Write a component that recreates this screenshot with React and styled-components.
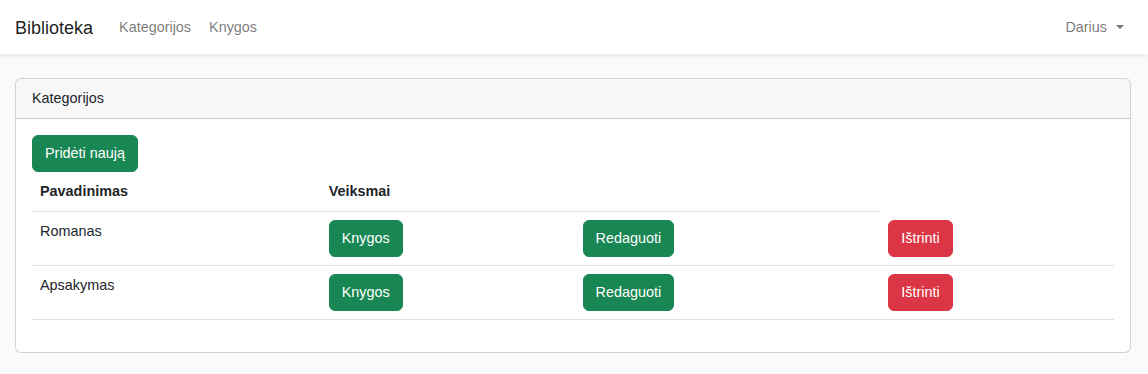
import React from "react";
import styled, { createGlobalStyle } from "styled-components";

const Global = createGlobalStyle`
  * { box-sizing: border-box; }
  html, body { margin: 0; padding: 0; }
  body {
    background: #f8fafc;
    font-family: "Liberation Sans", Arial, sans-serif;
    font-size: 14.4px;
    line-height: 1.6;
    color: #212529;
  }
`;

const Navbar = styled.nav`
  background: #fff;
  height: 54px;
  box-shadow: 0 2px 4px rgba(0, 0, 0, 0.075);
  display: flex;
  align-items: center;
  padding: 2px 17px 0 15px;
`;

const Brand = styled.a`
  font-size: 18px;
  color: rgba(0, 0, 0, 0.9);
  text-decoration: none;
  margin-right: 26px;
  line-height: 1;
`;

const NavLinks = styled.div`
  display: flex;
  gap: 18px;
  flex: 1;
`;

const NavLink = styled.a`
  color: rgba(0, 0, 0, 0.55);
  text-decoration: none;
`;

const UserMenu = styled.a`
  color: rgba(0, 0, 0, 0.55);
  text-decoration: none;
  margin-right: 7px;
  &::after {
    content: "";
    display: inline-block;
    margin-left: 9px;
    vertical-align: 3.5px;
    border-top: 4.3px solid rgba(0, 0, 0, 0.55);
    border-left: 4.3px solid transparent;
    border-right: 4.3px solid transparent;
  }
`;

const Main = styled.main`
  padding: 24px 17px 24px 15px;
`;

const Card = styled.div`
  background: #fff;
  border: 1px solid rgba(0, 0, 0, 0.175);
  border-radius: 6px;
`;

const CardHeader = styled.div`
  background: rgba(0, 0, 0, 0.03);
  border-bottom: 1px solid rgba(0, 0, 0, 0.175);
  padding: 8px 16px;
  border-radius: 5px 5px 0 0;
`;

const CardBody = styled.div`
  padding: 16px;
`;

const Button = styled.button`
  font-family: inherit;
  font-size: 14.4px;
  line-height: 1.6;
  padding: 6px 12px;
  border-radius: 6px;
  border: 1px solid ${(p) => (p.$variant === "danger" ? "#dc3545" : "#198754")};
  background: ${(p) => (p.$variant === "danger" ? "#dc3545" : "#198754")};
  color: #fff;
  cursor: pointer;
`;

const Table = styled.table`
  width: 100%;
  border-collapse: collapse;
  margin-bottom: 16px;
`;

const Col = styled.col`
  width: ${(p) => p.$w}px;
`;

const Th = styled.th`
  text-align: left;
  font-weight: bold;
  padding: 8px;
  border-bottom: 1px solid #dee2e6;
  vertical-align: bottom;
`;

const Td = styled.td`
  padding: 8px;
  border-bottom: 1px solid #dee2e6;
  vertical-align: top;
`;

const rows = ["Romanas", "Apsakymas"];

export default function App() {
  return (
    <>
      <Global />
      <Navbar>
        <Brand href="#">Biblioteka</Brand>
        <NavLinks>
          <NavLink href="#">Kategorijos</NavLink>
          <NavLink href="#">Knygos</NavLink>
        </NavLinks>
        <UserMenu href="#">Darius</UserMenu>
      </Navbar>
      <Main>
        <Card>
          <CardHeader>Kategorijos</CardHeader>
          <CardBody>
            <Button>Pridėti naują</Button>
            <Table>
              <colgroup>
                <Col $w={289} />
                <Col $w={254} />
                <Col $w={306} />
                <Col $w={234} />
              </colgroup>
              <thead>
                <tr>
                  <Th>Pavadinimas</Th>
                  <Th colSpan={2}>Veiksmai</Th>
                </tr>
              </thead>
              <tbody>
                {rows.map((r) => (
                  <tr key={r}>
                    <Td>{r}</Td>
                    <Td>
                      <Button>Knygos</Button>
                    </Td>
                    <Td>
                      <Button>Redaguoti</Button>
                    </Td>
                    <Td>
                      <Button $variant="danger">Ištrinti</Button>
                    </Td>
                  </tr>
                ))}
              </tbody>
            </Table>
          </CardBody>
        </Card>
      </Main>
    </>
  );
}
